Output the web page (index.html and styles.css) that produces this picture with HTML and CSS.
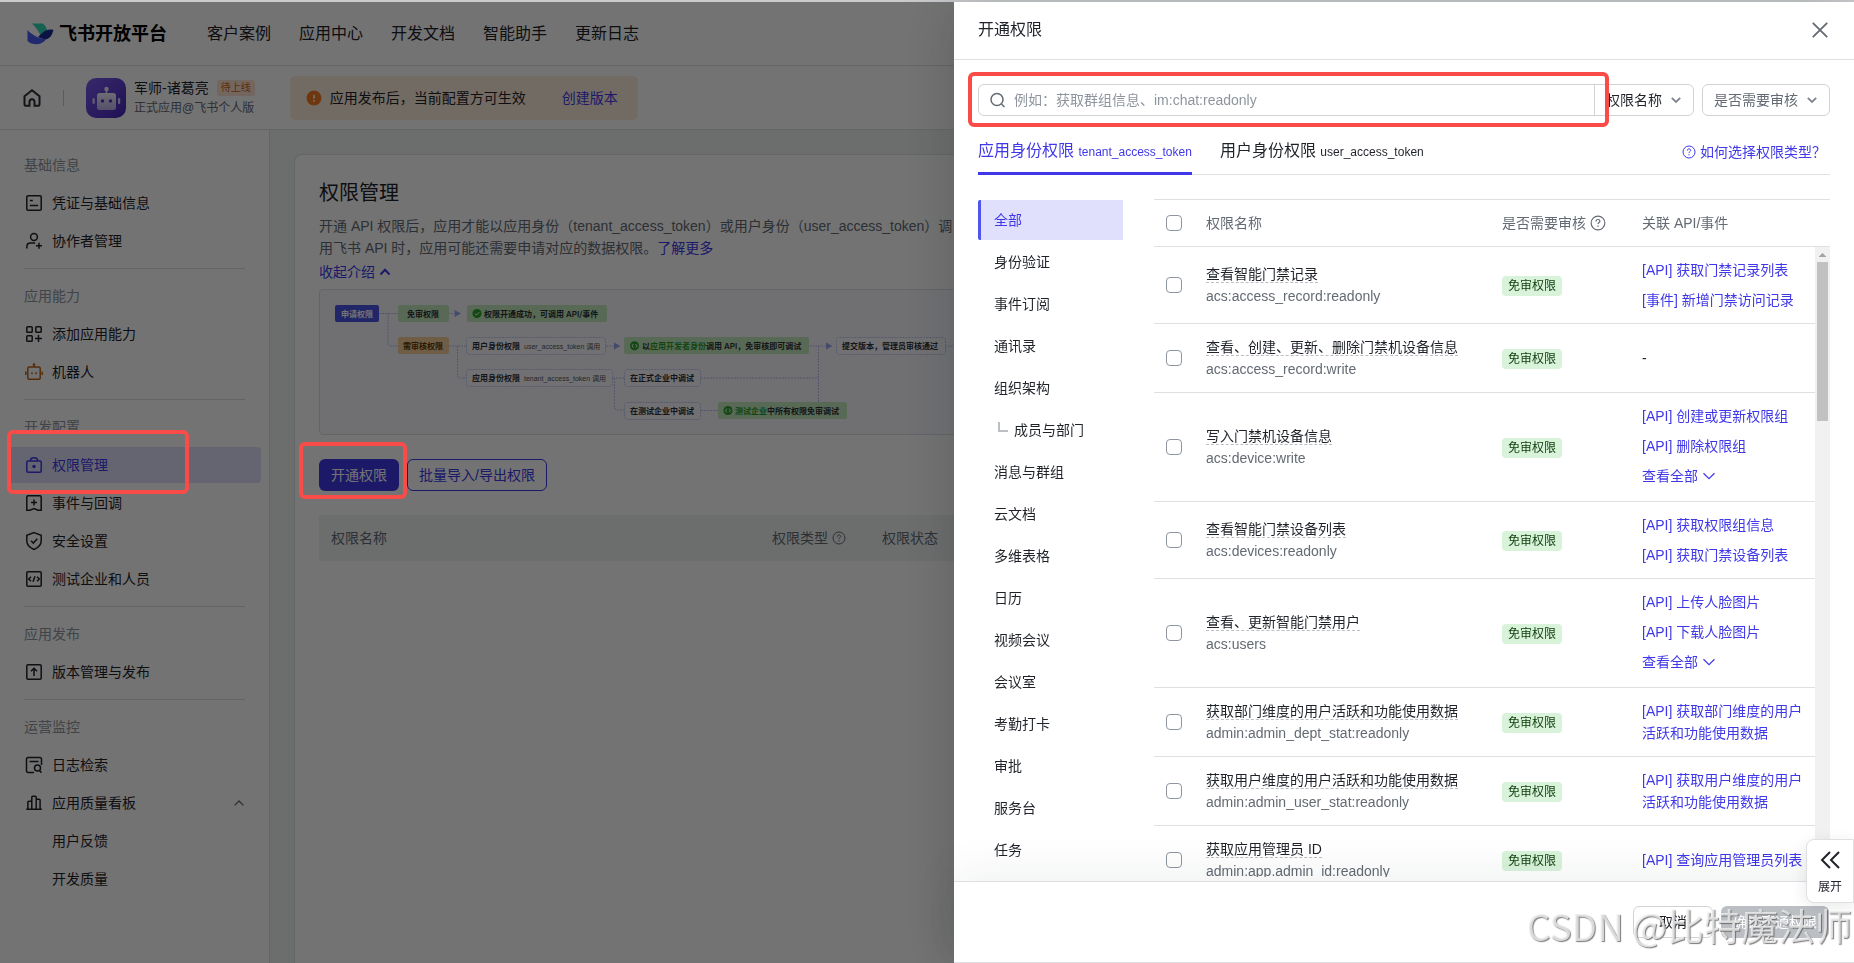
FILE: index.html
```html
<!DOCTYPE html>
<html lang="zh-CN">
<head>
<meta charset="utf-8">
<meta name="viewport" content="width=device-width, initial-scale=1">
<title>飞书开放平台 - 权限管理</title>
<link rel="stylesheet" href="styles.css">
</head>
<body>
<div class="page">
  <header class="topbar">
    <a class="brand" href="#">
      <svg class="brand-logo" viewBox="0 0 27 22" aria-hidden="true">
        <path d="M5 .5h11c2.500 2 4 5 4.500 8l-6.500 5C12 9 9 4 5 .5z" fill="#33d6b5"/>
        <path d="M26.500 7c-1.500 5-3 9-9 9.500L11 14c4-3.500 8-9 15.500-7z" fill="#1a2a99"/>
        <path d="M.5 7C4 11 10 15 19 16.500 15 22 6 23 .5 18z" fill="#4a5bf5"/>
      </svg>
      <span class="brand-name">飞书开放平台</span>
    </a>
    <nav class="topnav">
      <a href="#">客户案例</a>
      <a href="#">应用中心</a>
      <a href="#">开发文档</a>
      <a href="#">智能助手</a>
      <a href="#">更新日志</a>
    </nav>
  </header>

  <div class="appbar">
    <a class="home" href="#" aria-label="首页">
      <svg class="icon-home" viewBox="0 0 18 18"><path d="M1.500 7.200 9 1.200l7.500 6v8.300a1.200 1.200 0 0 1-1.200 1.200h-3.800v-4a2.500 2.500 0 0 0-5 0v4H2.700a1.200 1.200 0 0 1-1.200-1.200z"/></svg>
    </a>
    <span class="vline"></span>
    <svg class="avatar" viewBox="0 0 40 40" aria-hidden="true">
      <defs>
        <linearGradient id="av" x1="0" y1="0" x2="1" y2="1"><stop offset="0" stop-color="#7a5cf0"/><stop offset="1" stop-color="#4526b8"/></linearGradient>
        <linearGradient id="bot" x1="0" y1="0" x2="0" y2="1"><stop offset="0" stop-color="#f2effc"/><stop offset="1" stop-color="#bdb2ee"/></linearGradient>
      </defs>
      <rect width="40" height="40" rx="10" fill="url(#av)"/>
      <circle cx="20.500" cy="11" r="2.200" fill="#eeeafb"/>
      <path d="M19.700 11h1.600v5h-1.600z" fill="#eeeafb"/>
      <rect x="11" y="15" width="19" height="17" rx="2.500" fill="url(#bot)"/>
      <rect x="6.500" y="20" width="2.200" height="6" rx="1.100" fill="#d8d0f6"/>
      <rect x="32" y="20" width="2.200" height="6" rx="1.100" fill="#d8d0f6"/>
      <circle cx="16.500" cy="23" r="1.700" fill="#5433c8"/><circle cx="24.500" cy="23" r="1.700" fill="#5433c8"/>
    </svg>
    <div class="app-meta">
      <div class="app-name">军师-诸葛亮 <span class="badge">待上线</span></div>
      <div class="app-type">正式应用@飞书个人版</div>
    </div>
    <div class="notice">
      <svg class="i16" viewBox="0 0 16 16" aria-hidden="true"><circle cx="8" cy="8" r="7.500" fill="#f77b22"/><path d="M8 4.800v4" stroke="#ffead2" stroke-width="1.800"/><circle cx="8" cy="10.900" r="1" fill="#ffead2"/></svg>
      <span>应用发布后，当前配置方可生效</span>
      <a class="link" href="#">创建版本</a>
    </div>
  </div>

  <div class="workspace">
    <aside class="sidebar">
      <section class="side-group">
        <h2>基础信息</h2>
        <a class="side-item" href="#"><svg class="si" viewBox="0 0 16 16"><rect x=".8" y=".8" width="14.400" height="14.400" rx="1.200"/><path d="M3.800 5.500h3M3.800 10.500h8.400"/></svg>凭证与基础信息</a>
        <a class="side-item" href="#"><svg class="si" viewBox="0 0 16 16"><circle cx="8" cy="4" r="3.400"/><path d="M.9 15.500v-2.200c0-2 1.500-3.400 3.500-3.400h4.800M13 9.800v6M10 12.800h6"/></svg>协作者管理</a>
      </section>
      <section class="side-group">
        <h2>应用能力</h2>
        <a class="side-item" href="#"><svg class="si" viewBox="0 0 16 16"><rect x=".8" y=".8" width="5.400" height="5.400" rx=".8"/><rect x="9.800" y=".8" width="5.400" height="5.400" rx=".8"/><rect x=".8" y="9.800" width="5.400" height="5.400" rx=".8"/><path d="M12.500 9v7M9 12.500h7"/></svg>添加应用能力</a>
        <a class="side-item" href="#"><svg class="si bot" viewBox="0 0 16 16"><rect x="1.800" y="3" width="12.400" height="12.200" rx="1.200"/><path d="M8 3V.5M-.2 7.500v3.400M16.200 7.500v3.400M6 8.300v2M10 8.300v2"/><circle cx="8" cy=".6" r=".6"/></svg>机器人</a>
      </section>
      <section class="side-group">
        <h2>开发配置</h2>
        <a class="side-item active" href="#"><svg class="si" viewBox="0 0 16 16"><rect x=".8" y="4" width="14.400" height="11.200" rx="1.200"/><path d="M4.500 4V3c0-1.500 1.200-2.300 3.500-2.300s3.500.8 3.500 2.300v1"/><circle cx="8" cy="9.500" r="1" fill="currentColor"/></svg>权限管理</a>
        <a class="side-item" href="#"><svg class="si" viewBox="0 0 16 16"><path d="M2 .8h12a1.200 1.200 0 0 1 1.200 1.200v13.200H12L8 13.500l-4 1.700H.8V2A1.200 1.200 0 0 1 2 .8zM8 4.500v6M5 7.500h6"/></svg>事件与回调</a>
        <a class="side-item" href="#"><svg class="si" viewBox="0 0 16 16"><path d="M8-.4l7.200 2.700v5.500c0 4-3 7-7.200 8.700C3.800 14.800.8 11.800.8 7.800V2.300zM5 7.800l2.300 2.300 4-4.300"/></svg>安全设置</a>
        <a class="side-item" href="#"><svg class="si" viewBox="0 0 16 16"><rect x=".8" y=".8" width="14.400" height="14.400" rx="1.200"/><path d="M5 5.700 2.700 8 5 10.300M11 5.700 13.300 8 11 10.300M9 5.200 7 10.800"/></svg>测试企业和人员</a>
      </section>
      <section class="side-group">
        <h2>应用发布</h2>
        <a class="side-item" href="#"><svg class="si" viewBox="0 0 16 16"><rect x=".8" y=".8" width="14.400" height="14.400" rx="1.200"/><path d="M8 12V4.500M5 7.300l3-3 3 3"/></svg>版本管理与发布</a>
      </section>
      <section class="side-group">
        <h2>运营监控</h2>
        <a class="side-item" href="#"><svg class="si" viewBox="0 0 16 16"><path d="M8 15.500H2A1.500 1.500 0 0 1 .5 14V2A1.500 1.500 0 0 1 2 .5h12A1.500 1.500 0 0 1 15.500 2v6M3.500 4.500h9M13.500 13.500l2 2.300"/><circle cx="11.500" cy="11" r="3"/></svg>日志检索</a>
        <a class="side-item" href="#"><svg class="si" viewBox="0 0 16 16"><path d="M.2 14.200h15.600M1.900 14V7.200a1 1 0 0 1 1-1h2.600M5.800 14V2.300a1 1 0 0 1 1-1h2.400a1 1 0 0 1 1 1V14M10.500 4.300h2.600a1 1 0 0 1 1 1V14"/></svg>应用质量看板
          <svg class="chev-up" viewBox="0 0 10 6"><path d="M.6 5.400 5 1l4.400 4.400"/></svg></a>
        <a class="side-item sub" href="#">用户反馈</a>
        <a class="side-item sub" href="#">开发质量</a>
      </section>
    </aside>

    <main class="main">
      <div class="card">
        <h1>权限管理</h1>
        <p class="desc">开通 API 权限后，应用才能以应用身份（tenant_access_token）或用户身份（user_access_token）调用飞书 API 时，应用可能还需要申请对应的数据权限。<a class="link" href="#">了解更多</a></p>
        <a class="link fold" href="#">收起介绍 <svg class="fold-icon" viewBox="0 0 12 8"><path d="M1.500 6.500 6 1.800l4.500 4.700"/></svg></a>
        <div class="flow">
          <svg class="flow-svg" width="650" height="144" viewBox="0 0 650 144">
            <g class="wire">
              <path d="M59 23.500h75M68 23.500V53a3 3 0 0 0 3 3h7M129 56h18M137.500 56v29a3 3 0 0 0 3 3h6M286 56h8M293 88h11M294.500 88v29a3 3 0 0 0 3 3h7M489.500 56h17M498.500 56v56M381 88h117M381 120.500h17M625 56h20"/>
            </g>
            <g class="arrow"><path d="M134.500 20l6.500 3.500-6.500 3.500zM294 52.500l6.500 3.500-6.500 3.500zM506 52.500l6.500 3.500-6.500 3.500z"/></g>
            <rect class="n-blue" x="15" y="15" width="44" height="17" rx="2"/>
            <rect class="n-green" x="78" y="15" width="51" height="17" rx="2"/>
            <rect class="n-green" x="147" y="15" width="140" height="17" rx="2"/>
            <rect class="n-orange" x="78" y="47" width="51" height="17" rx="2"/>
            <rect class="n-dash" x="146.500" y="47.500" width="139" height="17" rx="3"/>
            <rect class="n-green" x="304" y="47" width="185" height="17" rx="2"/>
            <rect class="n-dash" x="516.500" y="47.500" width="109" height="17" rx="3"/>
            <rect class="n-dash" x="146.500" y="79.500" width="146" height="17" rx="3"/>
            <rect class="n-dash" x="304.500" y="79.500" width="76" height="17" rx="3"/>
            <rect class="n-dash" x="304.500" y="112.500" width="76" height="17" rx="3"/>
            <rect class="n-green" x="398" y="112" width="129" height="17" rx="2"/>
            <g class="dot"><circle cx="157" cy="23.500" r="4.500"/><circle cx="314.500" cy="55.800" r="4.500"/><circle cx="408" cy="120.500" r="4.500"/></g>
            <path class="dot-mark" d="M154.800 23.600l1.600 1.600 2.900-3M313.300 54l-1.200 1.800 1.200 1.800M315.700 54l1.200 1.800-1.200 1.800M406.800 118.700l-1.200 1.800 1.200 1.800M409.200 118.700l1.200 1.800-1.200 1.800"/>
            <text class="t-white" x="21" y="27">申请权限</text>
            <text x="87" y="27">免审权限</text>
            <text x="164" y="27">权限开通成功，可调用 API/事件</text>
            <text class="t-brown" x="83" y="59">需审核权限</text>
            <text x="152" y="59">用户身份权限</text>
            <text class="t-thin" x="204" y="59">user_access_token 调用</text>
            <text x="322" y="59">以<tspan class="t-green">应用开发者身份</tspan>调用 API，免审核即可调试</text>
            <text x="522" y="59">提交版本，管理员审核通过</text>
            <text x="152" y="91">应用身份权限</text>
            <text class="t-thin" x="204" y="91">tenant_access_token 调用</text>
            <text x="310" y="91">在正式企业中调试</text>
            <text x="310" y="124">在测试企业中调试</text>
            <text x="415" y="124"><tspan class="t-green">测试企业</tspan>中所有权限免审调试</text>
          </svg>
        </div>
        <div class="actions">
          <button class="btn primary" type="button">开通权限</button>
          <button class="btn outline" type="button">批量导入/导出权限</button>
        </div>
        <table class="perm-table">
          <colgroup><col class="p1"><col class="p2"><col></colgroup>
          <thead><tr>
            <th>权限名称</th>
            <th><span class="with-icon">权限类型 <svg class="i14" viewBox="0 0 14 14"><circle cx="7" cy="7" r="6"/><path d="M5.300 5.600c0-1 .7-1.700 1.700-1.700s1.700.6 1.700 1.500c0 1.100-1.700 1.200-1.700 2.500M7 9.200v1.200"/></svg></span></th>
            <th>权限状态</th>
          </tr></thead>
        </table>
      </div>
    </main>
  </div>
</div>

<div class="mask"></div>

<div class="drawer" role="dialog" aria-labelledby="drawer-title">
  <header class="drawer-head">
    <h2 id="drawer-title">开通权限</h2>
    <button class="close" type="button" aria-label="关闭"><svg class="icon-close" viewBox="0 0 16 16"><path d="M.8.8l14.400 14.400M15.200.8.8 15.200"/></svg></button>
  </header>
  <div class="drawer-body">
    <div class="filters">
      <div class="search-group">
        <label class="search">
          <svg class="i16 icon-search" viewBox="0 0 16 16"><circle cx="7" cy="7.500" r="6"/><path d="M11.500 12l3 3"/></svg>
          <input type="text" aria-label="搜索权限" placeholder="例如：获取群组信息、im:chat:readonly">
        </label>
        <div class="select-wrap joined">
          <select aria-label="搜索字段"><option>权限名称</option></select>
          <svg class="chev" viewBox="0 0 10 6"><path d="M.8.8 5 5 9.200.8"/></svg>
        </div>
      </div>
      <div class="select-wrap review">
        <select aria-label="是否需要审核"><option>是否需要审核</option></select>
        <svg class="chev" viewBox="0 0 10 6"><path d="M.8.8 5 5 9.200.8"/></svg>
      </div>
    </div>

    <div class="tabs">
      <button class="tab on" type="button">应用身份权限 <small>tenant_access_token</small></button>
      <button class="tab" type="button">用户身份权限 <small>user_access_token</small></button>
      <a class="link help" href="#"><svg class="i14" viewBox="0 0 14 14"><circle cx="7" cy="7" r="6"/><path d="M5.300 5.600c0-1 .7-1.700 1.700-1.700s1.700.6 1.700 1.500c0 1.100-1.700 1.200-1.700 2.500M7 9.200v1.200"/></svg>如何选择权限类型？</a>
    </div>

    <div class="content">
      <nav class="cats">
        <a class="on" href="#">全部</a>
        <a href="#">身份验证</a>
        <a href="#">事件订阅</a>
        <a href="#">通讯录</a>
        <a href="#">组织架构</a>
        <a class="child" href="#">成员与部门</a>
        <a href="#">消息与群组</a>
        <a href="#">云文档</a>
        <a href="#">多维表格</a>
        <a href="#">日历</a>
        <a href="#">视频会议</a>
        <a href="#">会议室</a>
        <a href="#">考勤打卡</a>
        <a href="#">审批</a>
        <a href="#">服务台</a>
        <a href="#">任务</a>
      </nav>
      <div class="grid">
        <table class="scopes head">
          <colgroup><col class="c1"><col class="c2"><col class="c3"><col></colgroup>
          <thead><tr>
            <th><input type="checkbox" aria-label="全选"></th>
            <th>权限名称</th>
            <th><span class="with-icon">是否需要审核 <svg class="i16" viewBox="0 0 14 14"><circle cx="7" cy="7" r="6"/><path d="M5.300 5.600c0-1 .7-1.700 1.700-1.700s1.700.6 1.700 1.500c0 1.100-1.700 1.200-1.700 2.500M7 9.200v1.200"/></svg></span></th>
            <th>关联 API/事件</th>
          </tr></thead>
        </table>
        <div class="scroll">
          <div class="rows">
            <table class="scopes">
              <colgroup><col class="c1"><col class="c2"><col class="c3"><col></colgroup>
              <tbody>
                <tr>
                  <td><input type="checkbox" aria-label="查看智能门禁记录"></td>
                  <td><span class="name">查看智能门禁记录</span><div class="code">acs:access_record:readonly</div></td>
                  <td><span class="tag">免审权限</span></td>
                  <td><div class="apis"><a href="#">[API] 获取门禁记录列表</a><a href="#">[事件] 新增门禁访问记录</a></div></td>
                </tr>
                <tr>
                  <td><input type="checkbox" aria-label="查看、创建、更新、删除门禁机设备信息"></td>
                  <td><span class="name">查看、创建、更新、删除门禁机设备信息</span><div class="code">acs:access_record:write</div></td>
                  <td><span class="tag">免审权限</span></td>
                  <td>-</td>
                </tr>
                <tr>
                  <td><input type="checkbox" aria-label="写入门禁机设备信息"></td>
                  <td><span class="name">写入门禁机设备信息</span><div class="code">acs:device:write</div></td>
                  <td><span class="tag">免审权限</span></td>
                  <td><div class="apis"><a href="#">[API] 创建或更新权限组</a><a href="#">[API] 删除权限组</a><button class="more" type="button">查看全部 <svg class="more-icon" viewBox="0 0 12 8"><path d="M.5 1.200 6 6.600l5.500-5.400"/></svg></button></div></td>
                </tr>
                <tr>
                  <td><input type="checkbox" aria-label="查看智能门禁设备列表"></td>
                  <td><span class="name">查看智能门禁设备列表</span><div class="code">acs:devices:readonly</div></td>
                  <td><span class="tag">免审权限</span></td>
                  <td><div class="apis"><a href="#">[API] 获取权限组信息</a><a href="#">[API] 获取门禁设备列表</a></div></td>
                </tr>
                <tr>
                  <td><input type="checkbox" aria-label="查看、更新智能门禁用户"></td>
                  <td><span class="name">查看、更新智能门禁用户</span><div class="code">acs:users</div></td>
                  <td><span class="tag">免审权限</span></td>
                  <td><div class="apis"><a href="#">[API] 上传人脸图片</a><a href="#">[API] 下载人脸图片</a><button class="more" type="button">查看全部 <svg class="more-icon" viewBox="0 0 12 8"><path d="M.5 1.200 6 6.600l5.500-5.400"/></svg></button></div></td>
                </tr>
                <tr>
                  <td><input type="checkbox" aria-label="获取部门维度的用户活跃和功能使用数据"></td>
                  <td><span class="name">获取部门维度的用户活跃和功能使用数据</span><div class="code">admin:admin_dept_stat:readonly</div></td>
                  <td><span class="tag">免审权限</span></td>
                  <td><div class="apis"><a href="#">[API] 获取部门维度的用户活跃和功能使用数据</a></div></td>
                </tr>
                <tr>
                  <td><input type="checkbox" aria-label="获取用户维度的用户活跃和功能使用数据"></td>
                  <td><span class="name">获取用户维度的用户活跃和功能使用数据</span><div class="code">admin:admin_user_stat:readonly</div></td>
                  <td><span class="tag">免审权限</span></td>
                  <td><div class="apis"><a href="#">[API] 获取用户维度的用户活跃和功能使用数据</a></div></td>
                </tr>
                <tr>
                  <td><input type="checkbox" aria-label="获取应用管理员 ID"></td>
                  <td><span class="name">获取应用管理员 ID</span><div class="code">admin:app.admin_id:readonly</div></td>
                  <td><span class="tag">免审权限</span></td>
                  <td><div class="apis"><a href="#">[API] 查询应用管理员列表</a></div></td>
                </tr>
              </tbody>
            </table>
          </div>
          <div class="scrollbar" aria-hidden="true"><span class="sb-arrow"></span><span class="sb-thumb"></span></div>
        </div>
      </div>
    </div>
  </div>
  <footer class="drawer-foot">
    <button class="btn plain" type="button">取消</button>
    <button class="btn disabled" type="button" disabled>确认开通权限</button>
  </footer>
</div>

<button class="expand" type="button">
  <svg class="icon-expand" viewBox="0 0 20 18"><path d="M10 1 2 9l8 8M19 1l-8 8 8 8"/></svg>
  <span>展开</span>
</button>

<div class="marker marker-side"></div>
<div class="marker marker-button"></div>
<div class="marker marker-search"></div>
<div class="watermark">CSDN @比特魔法师</div>
</body>
</html>
```
FILE: styles.css
```css
*, *::before { box-sizing: border-box; }

body {
  margin: 0;
  height: 100vh;
  overflow: hidden;
  background: #fff;
  color: #1f2329;
  font: 14px/22px "Liberation Sans", "Noto Sans CJK SC", sans-serif;
}

a { color: inherit; text-decoration: none; }
h1, h2, p { margin: 0; font-weight: 400; }
button, input, select { font: inherit; color: inherit; }
button { cursor: pointer; }
svg { flex: none; fill: none; stroke: none; overflow: visible; }
table { border-collapse: collapse; table-layout: fixed; width: 100%; }
th { font-weight: 400; text-align: left; }

.link { color: #4038e8; }
.i16 { width: 16px; height: 16px; }
.i14 { width: 14px; height: 14px; }

/* Page frame */
.page {
  display: flex;
  flex-direction: column;
  height: 100vh;
  border-top: 2px solid #c8cacc;
}

.topbar {
  display: flex;
  align-items: center;
  gap: 40px;
  height: 64px;
  padding: 0 27px;
  border-bottom: 1px solid #dee0e3;
}
.brand { display: flex; align-items: center; gap: 5px; }
.brand-logo { width: 27px; height: 22px; }
.brand-name { font-size: 18px; font-weight: 700; color: #000; }
.topnav { display: flex; gap: 28px; font-size: 16px; }

.appbar {
  display: flex;
  align-items: center;
  height: 64px;
  padding: 0 23px;
  border-bottom: 1px solid #dee0e3;
}
.home { display: flex; }
.icon-home { width: 18px; height: 18px; stroke: #2b2f36; stroke-width: 2; }
.vline { width: 1px; height: 16px; margin: 0 22px; background: #c9cbcf; }
.avatar { width: 40px; height: 40px; }
.app-meta { margin-left: 8px; line-height: 20px; }
.app-name { display: flex; align-items: center; gap: 8px; }
.app-type { font-size: 12px; color: #646a73; }
.badge {
  padding: 0 4px;
  border-radius: 3px;
  background: #fde3d3;
  color: #d2600f;
  font-size: 10px;
  line-height: 16px;
}
.notice {
  display: flex;
  align-items: center;
  gap: 8px;
  height: 44px;
  margin-left: 35px;
  padding: 0 20px 0 16px;
  border-radius: 5px;
  background: #fdeedd;
}
.notice .link { margin-left: 28px; }

.workspace { display: flex; flex: 1; min-height: 0; }

/* Sidebar */
.sidebar {
  width: 270px;
  flex: none;
  padding: 17px 8px;
  border-right: 1px solid #dee0e3;
}
.side-group { display: flex; flex-direction: column; gap: 2px; position: relative; }
.side-group + .side-group::before {
  content: "";
  height: 1px;
  margin: 9px 16px 7px;
  background: #dadcdf;
}
.side-group h2 { padding: 0 16px; font-size: 14px; line-height: 36px; color: #8f959e; }
.side-item {
  display: flex;
  align-items: center;
  gap: 10px;
  height: 36px;
  padding: 0 17px 0 18px;
  border-radius: 4px;
}
.side-item.sub { padding-left: 44px; }
.side-item.active { background: #e0dffa; color: #4038e8; }
.si { width: 16px; height: 16px; stroke: currentColor; stroke-width: 1.5; }
.si.bot { stroke: #b8651a; }
.chev-up { width: 10px; height: 6px; margin-left: auto; stroke: #646a73; stroke-width: 1.3; }

/* Main card */
.main { flex: 1; min-width: 0; padding: 24px 24px 0; background: #eff2f1; }
.card {
  height: 100%;
  padding: 24px;
  border: 1px solid #dee0e3;
  border-bottom: 0;
  border-radius: 8px 8px 0 0;
  background: #fff;
}
.card h1 { font-size: 20px; line-height: 28px; margin: 0 0 8px; }
.desc { max-width: 640px; color: #646a73; }
.fold { display: flex; align-items: center; gap: 4px; width: max-content; margin-top: 2px; }
.fold-icon { width: 12px; height: 8px; stroke: #4038e8; stroke-width: 2; }
.flow {
  margin-top: 6px;
  border: 1px solid #dee0e3;
  border-radius: 4px;
  background: #f8f9fe;
}
.flow-svg { display: block; }
.flow-svg text {
  font: 600 8px Inter, "Noto Sans CJK SC", sans-serif;
  fill: #2b2f36;
}
.flow-svg .t-white { fill: #fff; }
.flow-svg .t-brown { fill: #5c3a05; }
.flow-svg .t-green { fill: #2a9a2a; }
.flow-svg .t-thin { font: 400 7px "Liberation Sans", "Noto Sans CJK SC", sans-serif; fill: #51565d; }
.wire { stroke: #b9bff0; stroke-width: 1; stroke-dasharray: 2 1; }
.arrow { fill: #9aa4f2; }
.n-blue { fill: #4954e6; }
.n-green { fill: #c3e9bd; }
.n-orange { fill: #f5cf9c; }
.n-dash { fill: #fbfbff; stroke: #c3c8f2; stroke-dasharray: 2 1; }
.dot { fill: #2ca02c; }
.dot-mark { stroke: #fff; stroke-width: 1; }

.actions { display: flex; gap: 8px; margin-top: 24px; }
.btn {
  height: 32px;
  padding: 0 11px;
  border: 1px solid transparent;
  border-radius: 6px;
  background: #fff;
}
.btn.primary { background: #4038e8; color: #fff; }
.btn.outline { border-color: #4038e8; color: #4038e8; }
.btn.plain { min-width: 80px; border-color: #d0d3d6; }
.btn.disabled { background: #bbbfc4; color: #fff; cursor: default; }

.with-icon { display: inline-flex; align-items: center; gap: 4px; }
.with-icon svg, .help svg { stroke: currentColor; }
.perm-table { margin-top: 24px; background: #f0f3f2; color: #646a73; }
.perm-table th { padding: 12px; }
.p1 { width: 441px; }
.p2 { width: 110px; }

/* Overlay */
.mask { position: fixed; inset: 2px 0 0; background: rgba(0, 0, 0, .55); }

/* Drawer */
.drawer {
  position: fixed;
  inset: 2px 0 0 auto;
  display: flex;
  flex-direction: column;
  width: min(900px, 100%);
  background: #fff;
  box-shadow: -6px 0 48px rgba(31, 35, 41, .2);
}
.drawer-head {
  display: flex;
  align-items: center;
  justify-content: space-between;
  height: 58px;
  padding: 0 26px 1px 24px;
  border-bottom: 1px solid #dee0e3;
}
.drawer-head h2 { font-size: 16px; line-height: 24px; }
.close { display: flex; padding: 0; border: 0; background: none; }
.icon-close { width: 16px; height: 16px; stroke: #646a73; stroke-width: 1.8; }

.drawer-body {
  display: flex;
  flex: 1;
  flex-direction: column;
  min-height: 0;
  padding: 24px 24px 0;
}
.filters { display: flex; gap: 8px; }
.search-group {
  display: flex;
  flex: 1;
  height: 32px;
  border: 1px solid #d0d3d6;
  border-radius: 6px;
}
.search { display: flex; flex: 1; align-items: center; gap: 8px; padding-left: 11px; }
.search input { flex: 1; min-width: 0; padding: 0; border: 0; outline: 0; background: none; }
.search input::placeholder { color: #8f959e; opacity: 1; }
.icon-search { stroke: #646a73; stroke-width: 1.5; }
.select-wrap { position: relative; display: flex; align-items: center; }
.select-wrap select {
  width: 100%;
  height: 100%;
  padding: 0 0 0 11px;
  border: 0;
  outline: 0;
  background: none;
  appearance: none;
}
.select-wrap.joined { width: 99px; border-left: 1px solid #d0d3d6; }
.select-wrap.review { width: 128px; border: 1px solid #d0d3d6; border-radius: 6px; color: #646a73; }
.chev {
  position: absolute;
  right: 12px;
  width: 10px;
  height: 6px;
  stroke: #80858d;
  stroke-width: 1.8;
  pointer-events: none;
}

.tabs {
  display: flex;
  align-items: flex-start;
  gap: 28px;
  height: 39px;
  margin-top: 20px;
  border-bottom: 1px solid #dee0e3;
}
.tab {
  height: 39px;
  padding: 3px 0 9px;
  border: 0;
  border-bottom: 3px solid transparent;
  background: none;
  font-size: 16px;
  line-height: 24px;
}
.tab small { font-size: 12px; }
.tab.on { border-color: #4038e8; border-radius: 2px 2px 0 0; color: #4038e8; }
.help { display: flex; align-items: center; gap: 4px; margin: 5px 4px 0 auto; }

.content { display: flex; flex: 1; gap: 31px; min-height: 0; margin-top: 24px; }
.cats { display: flex; flex: none; flex-direction: column; gap: 2px; width: 145px; padding-top: 1px; overflow: hidden; }
.cats a { flex: none; padding: 9px 0 9px 13px; border-left: 3px solid transparent; }
.cats .on { border-color: #4f55ee; border-radius: 2px 0 0 2px; background: #e1e0fc; color: #4038e8; }
.cats .child { display: flex; gap: 6px; padding-left: 17px; }
.cats .child::before {
  content: "";
  width: 10px;
  height: 10px;
  margin-top: 3px;
  border: solid #bbbfc4;
  border-width: 0 0 2px 2px;
}

.grid { display: flex; flex: 1; flex-direction: column; min-width: 0; padding-bottom: 4px; }
.scopes.head { border-top: 1px solid #dee0e3; color: #646a73; }
.scopes th, .scopes td { padding: 12px 12px 12px 0; border-bottom: 1px solid #dee0e3; }
.scopes th:first-child, .scopes td:first-child { padding-left: 12px; }
.c1 { width: 52px; }
.c2 { width: 296px; }
.c3 { width: 140px; }
.scopes input {
  display: block;
  width: 16px;
  height: 16px;
  margin: 0;
  border: 1px solid #8f959e;
  border-radius: 4px;
  background: #fff;
  appearance: none;
}
.name { border-bottom: 1px dashed #bbbfc4; }
.code { color: #646a73; }
.tag {
  display: inline-block;
  padding: 0 6px;
  border-radius: 4px;
  background: #d9f3db;
  color: #12400f;
  font-size: 12px;
  line-height: 20px;
  vertical-align: middle;
}
.apis { display: flex; flex-direction: column; align-items: flex-start; gap: 8px; color: #4038e8; }
.more {
  display: flex;
  align-items: center;
  gap: 5px;
  margin-bottom: 2px;
  padding: 0;
  border: 0;
  background: none;
  color: #4038e8;
}
.more-icon { width: 12px; height: 8px; stroke: #4038e8; stroke-width: 1.2; }

.scroll { display: flex; flex: 1; min-height: 0; }
.rows { flex: 1; min-width: 0; overflow: hidden; }
.scrollbar { display: flex; flex-direction: column; align-items: center; width: 15px; background: #f1f1f1; }
.sb-arrow {
  width: 8px;
  height: 4px;
  margin: 6px 0 5px;
  background: #a3a3a3;
  clip-path: polygon(50% 0, 100% 100%, 0 100%);
}
.sb-thumb { width: 11px; height: 159px; background: #c1c1c1; }

.drawer-foot {
  display: flex;
  justify-content: flex-end;
  gap: 8px;
  height: 82px;
  padding: 24px 25px;
  border-top: 1px solid #dee0e3;
  border-bottom: 1px solid #dee0e3;
  background: #fff;
  box-shadow: 0 -4px 48px rgba(31, 35, 41, .08);
}

.expand {
  position: fixed;
  right: 0;
  bottom: 60px;
  display: flex;
  flex-direction: column;
  align-items: center;
  gap: 7px;
  width: 48px;
  height: 64px;
  padding: 11px 0 0;
  border: 1px solid #dee0e3;
  border-radius: 8px 0 0 8px;
  background: #fff;
  box-shadow: 0 4px 16px rgba(31, 35, 41, .1);
  font-size: 12px;
}
.icon-expand { width: 20px; height: 18px; stroke: #1f2329; stroke-width: 2; }

/* Annotations over the page */
.marker { position: fixed; border: 4px solid #f94c48; border-radius: 6px; pointer-events: none; }
.marker-side { left: 7px; top: 430px; width: 182px; height: 64px; }
.marker-button { left: 299px; top: 442px; width: 108px; height: 57px; }
.marker-search { left: 968px; top: 72px; width: 641px; height: 55px; }

.watermark {
  position: fixed;
  right: 2px;
  bottom: 12px;
  color: rgba(240, 240, 240, .8);
  font: 400 37px/52px "Noto Sans CJK SC", sans-serif;
  text-shadow: 1px 1px 1px rgba(90, 90, 90, .8);
  pointer-events: none;
}
```
